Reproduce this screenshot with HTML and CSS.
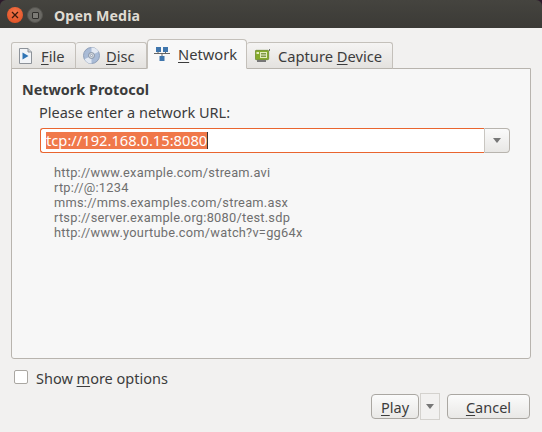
FILE: index.html
```html
<!DOCTYPE html>
<html lang="en">
<head>
<meta charset="utf-8">
<title>Open Media</title>
<link rel="stylesheet" href="styles.css">
</head>
<body>
<div class="window">
  <header class="titlebar">
    <span class="wbtn close"><svg width="8" height="8" viewBox="0 0 8 8"><path d="M1 1l6 6M7 1L1 7" stroke="#3c1a0c" stroke-width="1.3"/></svg></span>
    <span class="wbtn max"><span class="maxbox"></span></span>
    <span class="wtitle">Open Media</span>
  </header>
  <main class="content">
    <div class="tabs">
      <div class="tab t-file">
        <svg width="13" height="16" viewBox="0 0 13 16"><path d="M.5.500h8.500l3.500 3.500v11.500h-12z" fill="#f2f4f7" stroke="#8d9299"/><path d="M9 .5v3.500h3.500" fill="#cfd3d8" stroke="#8d9299"/><path d="M3.500 4.500l6 3.500-6 3.500z" fill="#2f74b5"/></svg>
        <span><u>F</u>ile</span>
      </div>
      <div class="tab t-disc">
        <svg width="17" height="17" viewBox="0 0 17 17"><circle cx="8.500" cy="8.500" r="8" fill="#a9bbd6" stroke="#8f9fb8"/><path d="M8.500 .5a8 8 0 0 1 7 4.200l-4.500 2.300a3 3 0 0 0-2.500-1.300z" fill="#e4eaf3"/><path d="M8.500 16.500a8 8 0 0 1-7-4.200l4.500-2.300a3 3 0 0 0 2.500 1.300z" fill="#e4eaf3"/><circle cx="8.500" cy="8.500" r="3" fill="#d3d9e1" stroke="#7a8698" stroke-width=".8"/><circle cx="8.500" cy="8.500" r="1.100" fill="#f5f5f5" stroke="#7a8698" stroke-width=".6"/></svg>
        <span><u>D</u>isc</span>
      </div>
      <div class="tab t-net active">
        <svg width="16" height="14" viewBox="0 0 16 14"><path d="M0 6.500h16M8 6.500v2.500M4 5v1.500M11.500 5v1.500" stroke="#666" fill="none"/><rect x="2" y="0" width="5" height="5" fill="#3f76ad"/><rect x="9" y="0" width="5" height="5" fill="#3f76ad"/><rect x="5.500" y="9" width="5" height="5" fill="#3f76ad"/></svg>
        <span><u>N</u>etwork</span>
      </div>
      <div class="tab t-cap">
        <svg width="15" height="13" viewBox="0 0 15 13"><path d="M14.500 0v2" stroke="#777"/><rect x=".3" y="1.300" width="13.400" height="9.400" rx="1" fill="#86ab2c" stroke="#55731a" stroke-width=".6"/><rect x="5" y="3" width="7" height="6" fill="#e3edc0"/><path d="M6 4.500h5M6 6h5M6 7.500h5" stroke="#55731a" stroke-width=".7"/><rect x="1.500" y="3" width="2.500" height="2" fill="#e3edc0"/><path d="M2 11h9v2H2z" fill="#777"/></svg>
        <span>Capture <u>D</u>evice</span>
      </div>
    </div>
    <section class="pane">
      <h2 class="group">Network Protocol</h2>
      <div class="prompt">Please enter a network URL:</div>
      <div class="combo">
        <div class="url"><span class="sel">tcp://192.168.0.15:8080</span><span class="caret"></span></div>
        <div class="drop"><span class="arrow"></span></div>
      </div>
      <ul class="hints">
        <li>http://www.example.com/stream.avi</li>
        <li>rtp://@:1234</li>
        <li>mms://mms.examples.com/stream.asx</li>
        <li>rtsp://server.example.org:8080/test.sdp</li>
        <li>http://www.yourtube.com/watch?v=gg64x</li>
      </ul>
    </section>
    <label class="more"><span class="check"></span><span>Show <u>m</u>ore options</span></label>
    <div class="actions">
      <button class="btn play"><span><u>P</u>lay</span></button>
      <button class="menu"><span class="arrow"></span></button>
      <button class="btn cancel"><span><u>C</u>ancel</span></button>
    </div>
  </main>
</div>
</body>
</html>
```
FILE: styles.css
```css
* { box-sizing: border-box; }
html, body { margin: 0; padding: 0; background: #2c1a2b; }
body { width: 542px; height: 432px; overflow: hidden; font-family: "Noto Sans", "Open Sans", sans-serif; font-size: 14.500px; color: #3c3c3c; }
u { text-decoration-thickness: 1px; text-underline-offset: 2px; }
.window { width: 542px; height: 432px; display: flex; flex-direction: column; }
.titlebar { height: 28px; flex: none; background: linear-gradient(#45443f, #3b3a36); border-radius: 6px 6px 0 0; display: flex; align-items: center; padding: 2px 0 0 7px; }
.wbtn { width: 16px; height: 16px; border-radius: 50%; display: flex; align-items: center; justify-content: center; }
.close { background: radial-gradient(circle at 50% 35%, #f5764a, #dc4a1e); }
.max { background: #6a6964; border: 1px solid #55544f; margin-left: 4px; }
.maxbox { width: 7px; height: 7px; border: 1px solid #2f2e2b; border-radius: 1px; background: #7c7b76; }
.wtitle { color: #dfdbd2; font-weight: 700; font-size: 14.200px; margin-left: 11px; letter-spacing: .1px; }
.content { flex: 1; background: #f2f1f0; padding: 11px 11px 0; display: flex; flex-direction: column; }
.tabs { height: 30px; display: flex; align-items: flex-end; position: relative; z-index: 1; margin-bottom: -1px; }
.tab { height: 27px; display: flex; align-items: center; border: 1px solid #c4c0ba; border-bottom-color: #b8b4ae; border-left-width: 0; border-radius: 3px 3px 0 0; background: linear-gradient(#f5f4f3, #e4e2df); color: #3c3c3c; font-size: 14.700px; }
.tab:first-child { border-left-width: 1px; }
.t-file { width: 65px; padding-left: 7px; gap: 9px; }
.t-disc { width: 71px; padding-left: 7px; gap: 6px; }
.t-net { width: 100px; height: 30px; padding-left: 6px; gap: 8px; background: #f8f8f8; border-left-width: 1px; border-bottom-color: #f8f8f8; border-radius: 4px 4px 0 0; }
.t-cap { width: 146px; padding-left: 8px; gap: 8px; }
.pane { height: 291px; background: #f7f7f7; border: 1px solid #b8b4ae; border-radius: 0 0 3px 3px; padding: 11px 10px 0; flex: none; }
.group { margin: 0; font-size: 14.400px; font-weight: 700; line-height: 20px; color: #3c3c3c; }
.prompt { margin: 2px 0 0 17px; line-height: 20px; }
.combo { margin: 6px 0 0 18px; width: 470px; height: 25px; display: flex; }
.url { flex: 1; background: #fff; border: 1px solid #e9652f; border-right: 0; border-radius: 3px 0 0 3px; padding: 0 5px; display: flex; align-items: center; color: #fff; font-size: 14.700px; }
.sel { background: #f0784a; line-height: 17px; height: 17px; }
.caret { width: 1px; height: 17px; background: #333; }
.drop { width: 26px; background: linear-gradient(#fafafa, #e8e7e5); border: 1px solid #b8b4ae; border-left-color: #c9c6c1; border-radius: 0 4px 4px 0; display: flex; align-items: center; justify-content: center; }
.arrow { width: 0; height: 0; border: 4px solid transparent; border-top: 5px solid #777; border-bottom: 0; }
.hints { list-style: none; margin: 12px 0 0 32px; padding: 0; font-family: Roboto, "Noto Sans", sans-serif; font-size: 12.800px; line-height: 15px; color: #6f6f6f; letter-spacing: .25px; }
.more { display: flex; align-items: center; gap: 8px; margin: 9px 0 0 3px; height: 20px; }
.check { width: 14px; height: 14px; margin-bottom: 2px; background: #fff; border: 1px solid #aaa7a2; border-radius: 2px; }
.actions { display: flex; justify-content: flex-end; margin: 5px 1px 0 0; align-items: center; }
.btn { height: 25px; padding: 0; background: linear-gradient(#fbfbfb, #e9e8e6); border: 1px solid #aaa7a2; border-radius: 4px; font: inherit; color: #3c3c3c; }
.play { width: 48px; }
.menu { width: 20px; height: 27px; margin: 0 7px 0 1px; padding: 0; border: 1px solid #d4d2ce; background: #f2f1f0; display: flex; align-items: center; justify-content: center; }
.cancel { width: 83px; }
```
